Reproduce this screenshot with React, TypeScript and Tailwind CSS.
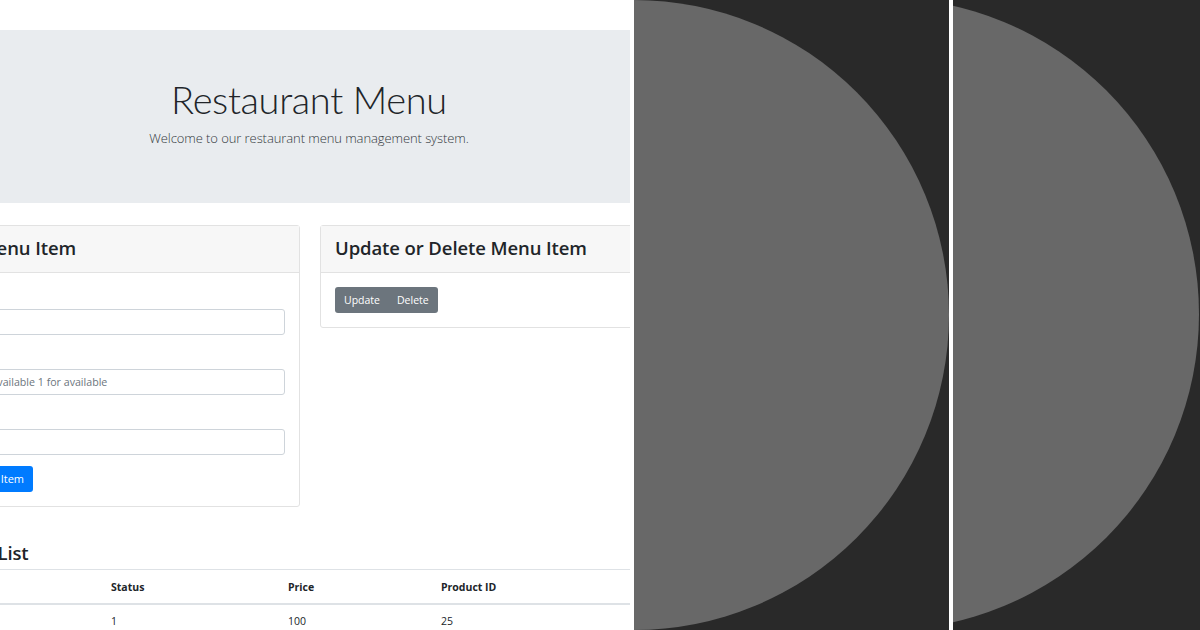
export default function App() {
  return (
    <div className="w-[1200px] h-[630px] overflow-hidden flex bg-white font-['Open_Sans',sans-serif]">
      {/* page screenshot, cropped on both sides */}
      <div className="w-[630px] h-full overflow-hidden shrink-0">
        <div className="w-[776px] ml-[-79px] pt-[30px]">
          <div className="h-[173px] bg-[#e9ecef] rounded-[3px] flex flex-col items-center pt-[45px]">
            <h1 className="text-[38px] leading-[48px] font-light tracking-[-0.35px] font-['Lato',sans-serif] text-[#212529]">Restaurant Menu</h1>
            <p className="text-[13px] leading-[20px] mt-[5px] font-light tracking-[-0.08px] text-[#343a40]">
              Welcome to our restaurant menu management system.
            </p>
          </div>

          <div className="grid grid-cols-[378.5px_377px] gap-x-[20.5px] mt-[22px] items-start">
            <div className="border border-[#e2e2e2] rounded-[3px] h-[282px]">
              <div className="h-[47px] bg-[#f7f7f7] border-b border-[#e2e2e2] pl-[18px] pr-[14px] pb-[3px] flex items-center">
                <h4 className="text-[18.5px] font-semibold tracking-[-0.1px] text-[#212529]">Add Menu Item</h4>
              </div>
              <form className="px-[14px] pt-[36px]">
                <input className="block w-full h-[26px] border border-[#ced4da] rounded-[3px] bg-white" />
                <input
                  className="block w-full h-[26px] mt-[34px] px-[9px] border border-[#ced4da] rounded-[3px] bg-white text-[10.65px] placeholder:text-[#6c757d]"
                  placeholder="0 for not available 1 for available"
                />
                <input className="block w-full h-[26px] mt-[34px] border border-[#ced4da] rounded-[3px] bg-white" />
                <button
                  type="button"
                  className="block h-[26px] mt-[11px] w-[97px] bg-[#007bff] text-white text-[11px] rounded-[3px]"
                >
                  Add Menu Item
                </button>
              </form>
            </div>

            <div className="border border-[#e2e2e2] rounded-[3px] h-[103px]">
              <div className="h-[47px] bg-[#f7f7f7] border-b border-[#e2e2e2] px-[14px] pb-[3px] flex items-center">
                <h4 className="text-[18.5px] font-semibold tracking-[-0.1px] text-[#212529]">Update or Delete Menu Item</h4>
              </div>
              <div className="flex px-[14px] pt-[14px]">
                <div className="flex h-[26px] pt-px bg-[#6c757d] rounded-[3px] text-white text-[10.5px]">
                  <button type="button" className="pl-[9px] pr-[8px]">Update</button>
                  <button type="button" className="pl-[9px] pr-[9px]">Delete</button>
                </div>
              </div>
            </div>
          </div>

          <h4 className="mt-[33px] pl-[2px] text-[18.5px] leading-[26px] font-semibold tracking-[-0.1px] text-[#212529]">Product List</h4>
          <table className="w-full table-fixed mt-[3px] text-[10.5px] text-[#212529] text-left">
            <thead>
              <tr className="h-[34px] border-t border-b-2 border-[#dee2e6]">
                <th className="w-[181px] px-[9px] pt-[3px] font-bold">Name</th>
                <th className="w-[177px] px-[9px] pt-[3px] font-bold">Status</th>
                <th className="w-[153px] px-[9px] pt-[3px] font-bold">Price</th>
                <th className="px-[9px] pt-[3px] font-bold">Product ID</th>
              </tr>
            </thead>
            <tbody>
              <tr className="h-[35px]">
                <td className="px-[9px]"></td>
                <td className="px-[9px]">1</td>
                <td className="px-[9px]">100</td>
                <td className="px-[9px]">25</td>
              </tr>
            </tbody>
          </table>
        </div>
      </div>

      <div className="w-[4px] shrink-0" />

      {/* first dark panel */}
      <div className="w-[315px] h-full shrink-0 bg-[#292929]">
        <svg width="315" height="630" viewBox="0 0 315 630" className="block">
          <circle cx="0" cy="315" r="315" fill="#686868" />
        </svg>
      </div>

      <div className="w-[4px] shrink-0" />

      {/* second dark panel */}
      <div className="flex-1 h-full bg-[#292929]">
        <svg width="247" height="630" viewBox="0 0 247 630" className="block">
          <circle cx="-70" cy="314" r="316" fill="#686868" />
        </svg>
      </div>
    </div>
  );
}
